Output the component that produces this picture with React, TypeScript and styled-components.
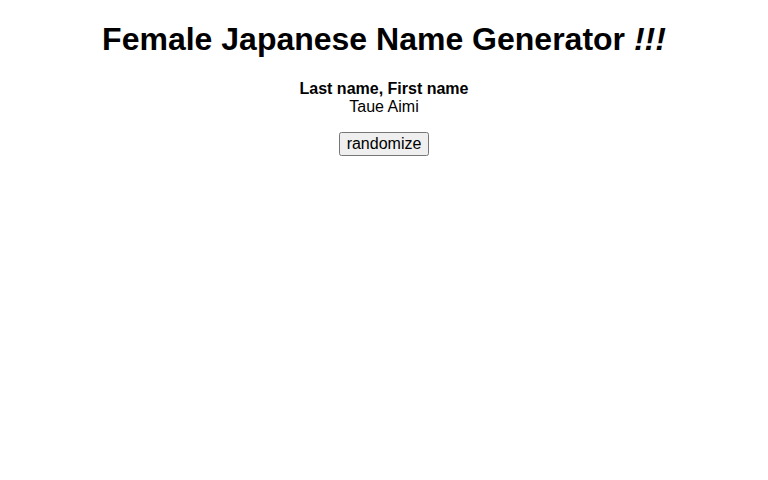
import { useState } from "react";
import styled, { createGlobalStyle } from "styled-components";

const GlobalStyle = createGlobalStyle`
  body {
    margin: 0;
    font-family: "Liberation Sans", Arial, sans-serif;
    color: #000;
    background: #fff;
  }
`;

const lastNames = ["Taue", "Sato", "Suzuki", "Takahashi", "Tanaka", "Ito"];
const firstNames = ["Aimi", "Yui", "Hana", "Sakura", "Aoi", "Rin"];

const pick = (list: string[]) => list[Math.floor(Math.random() * list.length)];

export default function App() {
  const [name, setName] = useState("Taue Aimi");

  return (
    <>
      <GlobalStyle />
      <Page>
        <Title>
          Female Japanese Name Generator <em>!!!</em>
        </Title>
        <Label>Last name, First name</Label>
        <Result>{name}</Result>
        <Controls>
          <RandomButton
            onClick={() => setName(`${pick(lastNames)} ${pick(firstNames)}`)}
          >
            randomize
          </RandomButton>
        </Controls>
      </Page>
    </>
  );
}

const Page = styled.main`
  padding: 0 8px;
  text-align: center;
`;

const Title = styled.h1`
  font-size: 32px;
  font-weight: 700;
  margin: 21.44px 0;
`;

const Label = styled.div`
  font-weight: 700;
  font-size: 16px;
`;

const Result = styled.div`
  font-size: 16px;
`;

const Controls = styled.p`
  margin: 16px 0;
`;

const RandomButton = styled.button`
  font-family: inherit;
  font-size: 16px;
  padding: 1px 6px;
`;
